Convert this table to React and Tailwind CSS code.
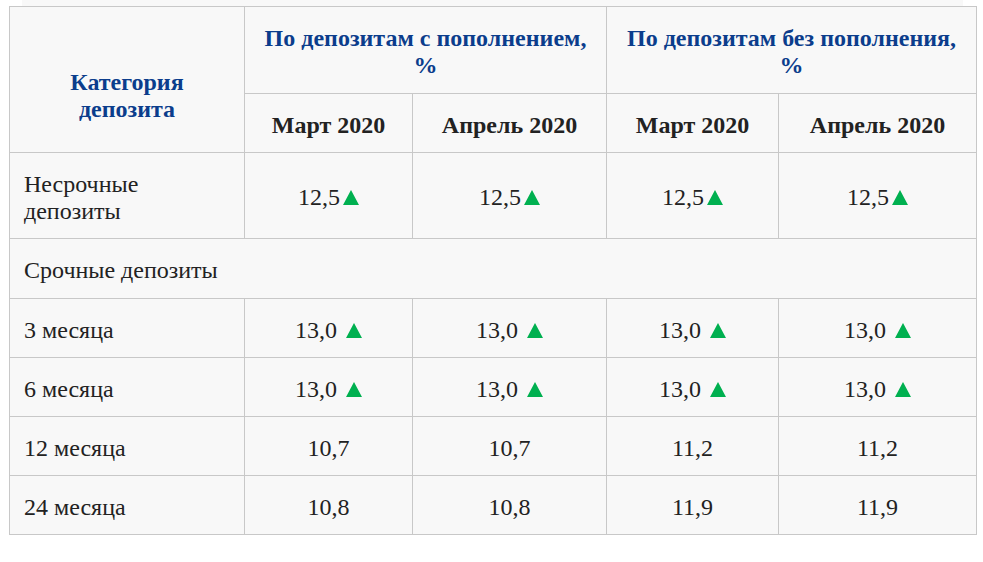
import React from 'react';

// green "up" marker next to values
const Up = () => (
  <svg className="inline-block align-baseline" width="16" height="15" viewBox="0 0 16 15">
    <polygon points="8,0 16,15 0,15" fill="#00b050" />
  </svg>
);

const rows = [
  { label: '3 месяца', values: ['13,0', '13,0', '13,0', '13,0'], up: true },
  { label: '6 месяца', values: ['13,0', '13,0', '13,0', '13,0'], up: true },
  { label: '12 месяца', values: ['10,7', '10,7', '11,2', '11,2'] },
  { label: '24 месяца', values: ['10,8', '10,8', '11,9', '11,9'] },
];

const cell = 'border border-[#c8c8c8] bg-[#f8f8f8]';
const body = `${cell} pt-[4px]`;

export default function App() {
  return (
    <div className="w-[983px] h-[562px] bg-white text-[24px] leading-[27px] text-[#222222] font-['Liberation_Serif','Times_New_Roman',serif]">
      <div className="ml-[22px] w-[941px] h-[6px] bg-[#f8f8f8]" />
      <table className="ml-[9px] w-[967px] table-fixed border-collapse">
        <colgroup>
          <col className="w-[235px]" />
          <col className="w-[168px]" />
          <col className="w-[194px]" />
          <col className="w-[172px]" />
          <col className="w-[198px]" />
        </colgroup>
        <thead>
          <tr className="h-[87px]">
            <th rowSpan={2} className={`${cell} pt-[33px] align-middle font-bold text-[#0b3d8c]`}>
              Категория<br />депозита
            </th>
            <th colSpan={2} className={`${cell} pt-[3px] align-middle font-bold text-[#0b3d8c]`}>
              По депозитам с пополнением,<br />%
            </th>
            <th colSpan={2} className={`${cell} pt-[3px] align-middle font-bold text-[#0b3d8c]`}>
              По депозитам без пополнения,<br />%
            </th>
          </tr>
          <tr className="h-[59px]">
            <th className={`${body} font-bold`}>Март 2020</th>
            <th className={`${body} font-bold`}>Апрель 2020</th>
            <th className={`${body} font-bold`}>Март 2020</th>
            <th className={`${body} font-bold`}>Апрель 2020</th>
          </tr>
        </thead>
        <tbody>
          <tr className="h-[86px]">
            <td className={`${body} pl-[14px]`}>Несрочные<br />депозиты</td>
            {[0, 1, 2, 3].map((i) => (
              <td key={i} className={`${body} text-center`}>12,5<span className="ml-[3px]"><Up /></span></td>
            ))}
          </tr>
          <tr className="h-[60px]">
            <td colSpan={5} className={`${body} pl-[14px]`}>Срочные депозиты</td>
          </tr>
          {rows.map((row) => (
            <tr key={row.label} className="h-[59px]">
              <td className={`${body} pl-[14px]`}>{row.label}</td>
              {row.values.map((v, i) => (
                <td key={i} className={`${body} text-center`}>
                  {v}
                  {row.up && <span className="ml-[9px]"><Up /></span>}
                </td>
              ))}
            </tr>
          ))}
        </tbody>
      </table>
    </div>
  );
}
